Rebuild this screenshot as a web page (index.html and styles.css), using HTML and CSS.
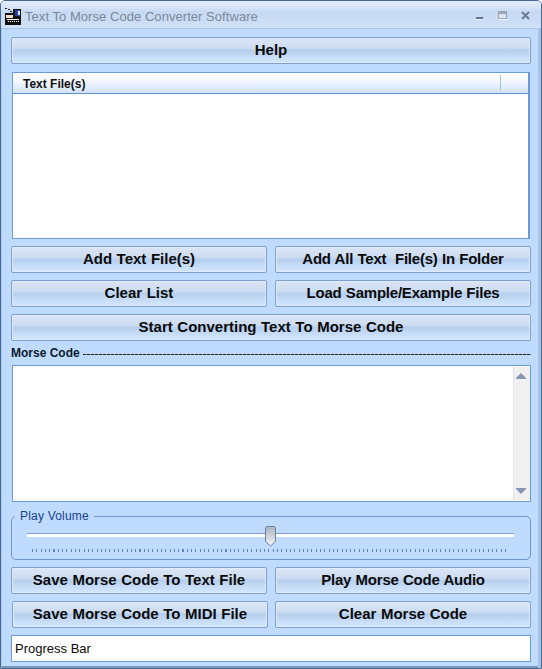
FILE: index.html
```html
<!DOCTYPE html>
<html lang="en">
<head>
    <meta charset="UTF-8">
    <title>Text To Morse Code Converter Software</title>
    <link rel="stylesheet" href="styles.css">
</head>
<body>

    <div class="window">
        <!-- Title bar -->
        <div class="titlebar">
            <svg class="app-icon" width="17" height="17" viewBox="0 0 17 17">
                <path d="M0 0h2v1H0zM3 1h2v1H3zM5 3h2v1H5z" fill="#222"/>
                <rect x="0" y="5" width="16" height="12" fill="#111"/>
                <rect x="1" y="7" width="7" height="3" fill="#f0dcc8"/>
                <rect x="8" y="1" width="8" height="8" fill="#111"/>
                <rect x="10" y="2" width="5" height="6" fill="#2a3fa8"/>
                <rect x="13" y="3" width="2" height="4" fill="#e8eefc"/>
                <path d="M2 11h12v1H2zM3 13h1v1H3zM5 13h1v1H5zM7 13h1v1H7zM9 13h1v1H9zM11 13h1v1h-1zM13 13h1v1h-1z" fill="#fff"/>
            </svg>
            <span class="title">Text To Morse Code Converter Software</span>
            <div class="controls">
                <svg width="10" height="10" viewBox="0 0 10 10"><rect x="1" y="6" width="7" height="2" fill="#5d6f8c"/><rect x="1" y="8" width="7" height="1" fill="#f4f8fe"/></svg>
                <svg width="10" height="10" viewBox="0 0 10 10"><rect x=".5" y=".5" width="8" height="7" fill="#dbe5f3" stroke="#9aa6b8"/><rect x="1" y="1" width="7" height="2" fill="#9aa6b8"/><rect x="0" y="8" width="9" height="1" fill="#f4f8fe"/></svg>
                <svg width="10" height="10" viewBox="0 0 10 10"><path d="M1 1l7 7M8 1l-7 7" stroke="#6b7c96" stroke-width="2" fill="none"/></svg>
            </div>
        </div>

        <div class="content">
            <button class="button">Help</button>

            <div class="list">
                <div class="list-header">
                    <span class="list-col">Text File(s)</span>
                </div>
            </div>

            <div class="row">
                <button class="button">Add Text File(s)</button>
                <button class="button tight">Add All Text &nbsp;File(s) In Folder</button>
            </div>
            <div class="row">
                <button class="button">Clear List</button>
                <button class="button tight">Load Sample/Example Files</button>
            </div>
            <button class="button">Start Converting Text To Morse Code</button>

            <div class="section-label">
                <span>Morse Code</span>
                <div class="dashes"></div>
            </div>

            <div class="memo">
                <div class="scrollbar">
                    <svg width="10" height="6" viewBox="0 0 10 6"><path d="M5 0l5 5v1H0V5z" fill="#8796b4"/></svg>
                    <svg width="10" height="6" viewBox="0 0 10 6"><path d="M0 0h10v1L5 6 0 1z" fill="#8796b4"/></svg>
                </div>
            </div>

            <fieldset class="volume">
                <legend>Play Volume</legend>
                <div class="track">
                    <svg class="thumb" width="11" height="21" viewBox="0 0 11 21">
                        <defs>
                            <linearGradient id="thumb-fill" x1="0" y1="0" x2="0" y2="1">
                                <stop offset="0" stop-color="#a9b2c0"/>
                                <stop offset="1" stop-color="#f4f6f9"/>
                            </linearGradient>
                        </defs>
                        <path d="M1.5.5h8l1 1v14l-5 4.5-5-4.5v-14z" fill="url(#thumb-fill)" stroke="#6d7f9c"/>
                    </svg>
                </div>
                <div class="ticks"></div>
            </fieldset>

            <div class="row">
                <button class="button">Save Morse Code To Text File</button>
                <button class="button tight">Play Morse Code Audio</button>
            </div>
            <div class="row">
                <button class="button shifted">Save Morse Code To MIDI File</button>
                <button class="button">Clear Morse Code</button>
            </div>

            <div class="progress">Progress Bar</div>
        </div>
    </div>

</body>
</html>
```

FILE: styles.css
```css
html, body {
    margin: 0;
    padding: 0;
}

body {
    width: 542px;
    height: 669px;
    overflow: hidden;
    font-family: "Liberation Sans", Arial, sans-serif;
    background-color: #ffffff;
}

.window {
    box-sizing: border-box;
    width: 542px;
    height: 669px;
    display: flex;
    flex-direction: column;
    background-color: #bfdbff;
    border: 1px solid #4a6a94;
    border-radius: 5px 5px 0 0;
    box-shadow: inset 1px 0 0 #a9c6ec, inset -3px 0 0 #aac2e4, inset 0 -2px 0 #7c96bb;
}

.titlebar {
    box-sizing: border-box;
    height: 28px;
    display: flex;
    align-items: center;
    padding: 0 10px 0 4px;
    background: linear-gradient(#e2ebf8 0, #d6e4f7 25%, #c6d9f3 40%, #cfe0f7 100%);
    border-bottom: 1px solid #a6c6ee;
    border-radius: 4px 4px 0 0;
}

.app-icon {
    margin-right: 3px;
    margin-top: 3px;
}

.title {
    font-size: 13px;
    letter-spacing: 0.05px;
    color: #7b8797;
    flex: 1;
    margin-top: 3px;
}

.controls {
    display: flex;
    align-items: center;
    gap: 13px;
    margin-top: 3px;
}

.content {
    display: flex;
    flex-direction: column;
    gap: 7px;
    padding: 8px 10px 0;
}

.button {
    box-sizing: border-box;
    height: 27px;
    width: 100%;
    padding: 0 0 2px;
    font-family: inherit;
    font-size: 15px;
    font-weight: bold;
    word-spacing: 0.4px;
    color: #0a0a0a;
    background: linear-gradient(#dbe6f5 0, #cddcf1 40%, #b6cfee 50%, #c6dcf7 75%, #d3e7fd 100%);
    border: 1px solid #7f9fcf;
    border-radius: 2px;
    box-shadow: inset 0 0 0 1px #dfeafa;
}

.button.tight {
    letter-spacing: -0.22px;
}

.button.shifted {
    margin-left: 1px;
    margin-right: -1px;
}

.row {
    display: grid;
    grid-template-columns: 256px 256px;
    gap: 8px;
}

.list {
    box-sizing: border-box;
    height: 167px;
    margin: 1px 1px 0;
    background-color: #ffffff;
    border: 1px solid #6b9ad8;
    border-right-width: 2px;
}

.list-header {
    box-sizing: border-box;
    height: 21px;
    display: flex;
    align-items: center;
    background: linear-gradient(#ffffff 0, #f4f8fe 40%, #cfe1f9 100%);
    border-bottom: 1px solid #5f94d8;
}

.list-col {
    box-sizing: border-box;
    width: 488px;
    padding: 2px 0 0 10px;
    font-size: 12px;
    font-weight: bold;
    color: #111111;
    border-right: 1px solid #9cc3f2;
}

.section-label {
    display: flex;
    align-items: center;
    gap: 3px;
    height: 10px;
    font-size: 12px;
    font-weight: bold;
    color: #0c1a2c;
}

.dashes {
    flex: 1;
    height: 1px;
    margin-top: 2px;
    background-image: repeating-linear-gradient(to right, #222222 0, #222222 3px, #8a9a8f 3px, #8a9a8f 4px);
}

.memo {
    box-sizing: border-box;
    height: 137px;
    margin-left: 1px;
    display: flex;
    justify-content: flex-end;
    background-color: #ffffff;
    border: 1px solid #6b9ad8;
}

.scrollbar {
    box-sizing: border-box;
    width: 17px;
    margin: 1px 0;
    padding: 6px 5px 6px 2px;
    display: flex;
    flex-direction: column;
    justify-content: space-between;
    background-color: #f0f0f0;
    border-left: 1px solid #e4e4e4;
}

.volume {
    box-sizing: border-box;
    height: 51px;
    margin: 0;
    padding: 0 16px 0 15px;
    border: 1px solid #6f95cf;
    border-radius: 5px;
}

.volume legend {
    padding: 0 5px;
    margin-left: -12px;
    font-size: 12px;
    letter-spacing: 0.2px;
    color: #15428b;
}

.track {
    position: relative;
    height: 3px;
    margin-top: 10px;
    background-color: #ffffff;
    border-top: 1px solid #7f9fcf;
}

.thumb {
    position: absolute;
    left: 238px;
    top: -8px;
}

.ticks {
    height: 3px;
    margin-top: 12px;
    margin-right: 5px;
    margin-left: 5px;
    background-image: repeating-linear-gradient(to right, #5f86c4 0, #5f86c4 1px, transparent 1px, transparent 4.3px);
}

.progress {
    box-sizing: border-box;
    height: 27px;
    line-height: 25px;
    padding-left: 3px;
    font-size: 13px;
    color: #0a0a0a;
    background-color: #ffffff;
    border: 1px solid #6b9ad8;
}
```
